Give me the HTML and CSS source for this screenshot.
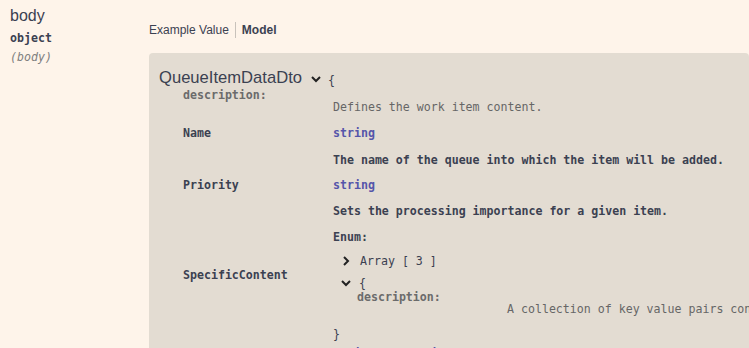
FILE: index.html
```html
<!DOCTYPE html>
<html lang="en">
<head>
    <meta charset="UTF-8">
    <title>Model</title>
    <link rel="stylesheet" href="styles.css">
</head>
<body>
    <div class="param-row">
        <!-- Parameter name column -->
        <div class="param-name">
            <div class="name">body</div>
            <div class="type">object</div>
            <div class="in">(body)</div>
        </div>

        <!-- Example / Model tabs and model box -->
        <div class="param-body">
            <div class="tabs">
                <span class="tab">Example Value</span>
                <span class="tab active">Model</span>
            </div>
            <div class="model-box">
                <div class="model-title">
                    <span>QueueItemDataDto</span>
                    <svg class="chev" width="10" height="8" viewBox="0 0 10 8"><path d="M1 2 L5 6 L9 2" fill="none" stroke="#222" stroke-width="2"/></svg>
                    <span class="brace">{</span>
                </div>

                <div class="prop desc-row">
                    <div class="label grey">description:</div>
                    <div class="value desc">Defines the work item content.</div>
                </div>

                <div class="prop name-row">
                    <div class="label">Name</div>
                    <div class="value">
                        <div class="ptype">string</div>
                        <div class="pdesc first">The name of the queue into which the item will be added.</div>
                    </div>
                </div>

                <div class="prop">
                    <div class="label">Priority</div>
                    <div class="value">
                        <div class="ptype">string</div>
                        <div class="pdesc">Sets the processing importance for a given item.</div>
                        <div class="pdesc">Enum:</div>
                        <div class="toggle-line array">
                            <svg class="chev" width="8" height="10" viewBox="0 0 8 10"><path d="M2 1 L6 5 L2 9" fill="none" stroke="#222" stroke-width="2"/></svg>
                            <span>Array [ 3 ]</span>
                        </div>
                    </div>
                </div>

                <div class="prop specific">
                    <div class="label">SpecificContent</div>
                    <div class="value">
                        <div class="toggle-line obj">
                            <svg class="chev" width="10" height="8" viewBox="0 0 10 8"><path d="M1 2 L5 6 L9 2" fill="none" stroke="#222" stroke-width="2"/></svg>
                            <span class="brace">{</span>
                        </div>
                        <div class="prop desc-row inner">
                            <div class="label grey">description:</div>
                            <div class="value desc">A collection of key value pairs containing the item content.</div>
                        </div>
                        <div class="close">}</div>
                    </div>
                </div>

                <div class="prop defer">
                    <div class="label">DeferDate</div>
                    <div class="value">
                        <div class="ptype">string($date-time)</div>
                    </div>
                </div>
            </div>
        </div>
    </div>
</body>
</html>
```

FILE: styles.css
```css
/* Parameter model view */
body {
    margin: 0;
    padding: 0;
    background: #fef4ea;
    color: #3b4151;
    font-family: 'Liberation Sans', Arial, sans-serif;
    overflow: hidden;
}

.param-row {
    display: flex;
    height: 348px;
}

.param-name {
    width: 139px;
    padding-left: 10px;
    padding-top: 7px;
    flex-shrink: 0;
}

.name {
    font-size: 16px;
    line-height: 18px;
    color: #3b4151;
}

.type {
    font-family: 'DejaVu Sans Mono', monospace;
    font-size: 11.6px;
    font-weight: bold;
    line-height: 14px;
    margin-top: 6px;
}

.in {
    font-family: 'DejaVu Sans Mono', monospace;
    font-size: 11.6px;
    font-style: italic;
    line-height: 14px;
    color: #808080;
    margin-top: 5px;
}

.param-body {
    flex: 1;
    min-width: 0;
}

.tabs {
    display: flex;
    margin-top: 22px;
    height: 31px;
    font-size: 12px;
    line-height: 16px;
}

.tab {
    padding-right: 6px;
}

.tab.active {
    font-weight: bold;
    padding-left: 6px;
    border-left: 1px solid #c8c2bb;
    height: 16px;
}

.model-box {
    background: #e3dcd2;
    border-radius: 4px;
    padding: 15px 10px 20px 10px;
    height: 400px;
    font-family: 'DejaVu Sans Mono', monospace;
    font-size: 11.6px;
    line-height: 14px;
    white-space: nowrap;
    overflow: hidden;
}

.model-title {
    display: flex;
    align-items: center;
    height: 20px;
    font-family: 'Liberation Sans', Arial, sans-serif;
    font-size: 16.6px;
    color: #3b4151;
}

.model-title .chev {
    margin-left: 9px;
    margin-right: 7px;
    margin-top: 2px;
}

.brace {
    font-family: 'DejaVu Sans Mono', monospace;
    font-size: 11.6px;
    margin-top: 3px;
}

.prop {
    display: flex;
    padding-left: 24px;
    margin-top: 11px;
}

.prop .label {
    width: 150px;
    flex-shrink: 0;
    font-weight: bold;
}

.label.grey {
    color: #6b6b6b;
}

.desc-row {
    margin-top: 0;
}

.name-row {
    margin-top: 12px;
}

.value.desc {
    padding-top: 12px;
    color: #666;
}

.ptype {
    color: #55a;
    font-weight: bold;
}

.pdesc {
    font-weight: bold;
    margin-top: 12px;
}

.pdesc.first {
    margin-top: 13px;
}

.toggle-line {
    display: flex;
    align-items: center;
    height: 14px;
}

.toggle-line.array {
    margin-top: 10px;
    padding-left: 9px;
}

.toggle-line.array .chev {
    margin-right: 10px;
}

.specific {
    margin-top: 0;
}

.toggle-line.obj {
    margin-top: 8px;
    padding-left: 8px;
}

.toggle-line.obj .chev {
    margin-right: 8px;
}

.toggle-line.obj .brace {
    margin-top: 0;
}

.desc-row.inner {
    padding-left: 24px;
}

.close {
    margin-top: 11px;
}

.defer {
    margin-top: 5px;
}
```
